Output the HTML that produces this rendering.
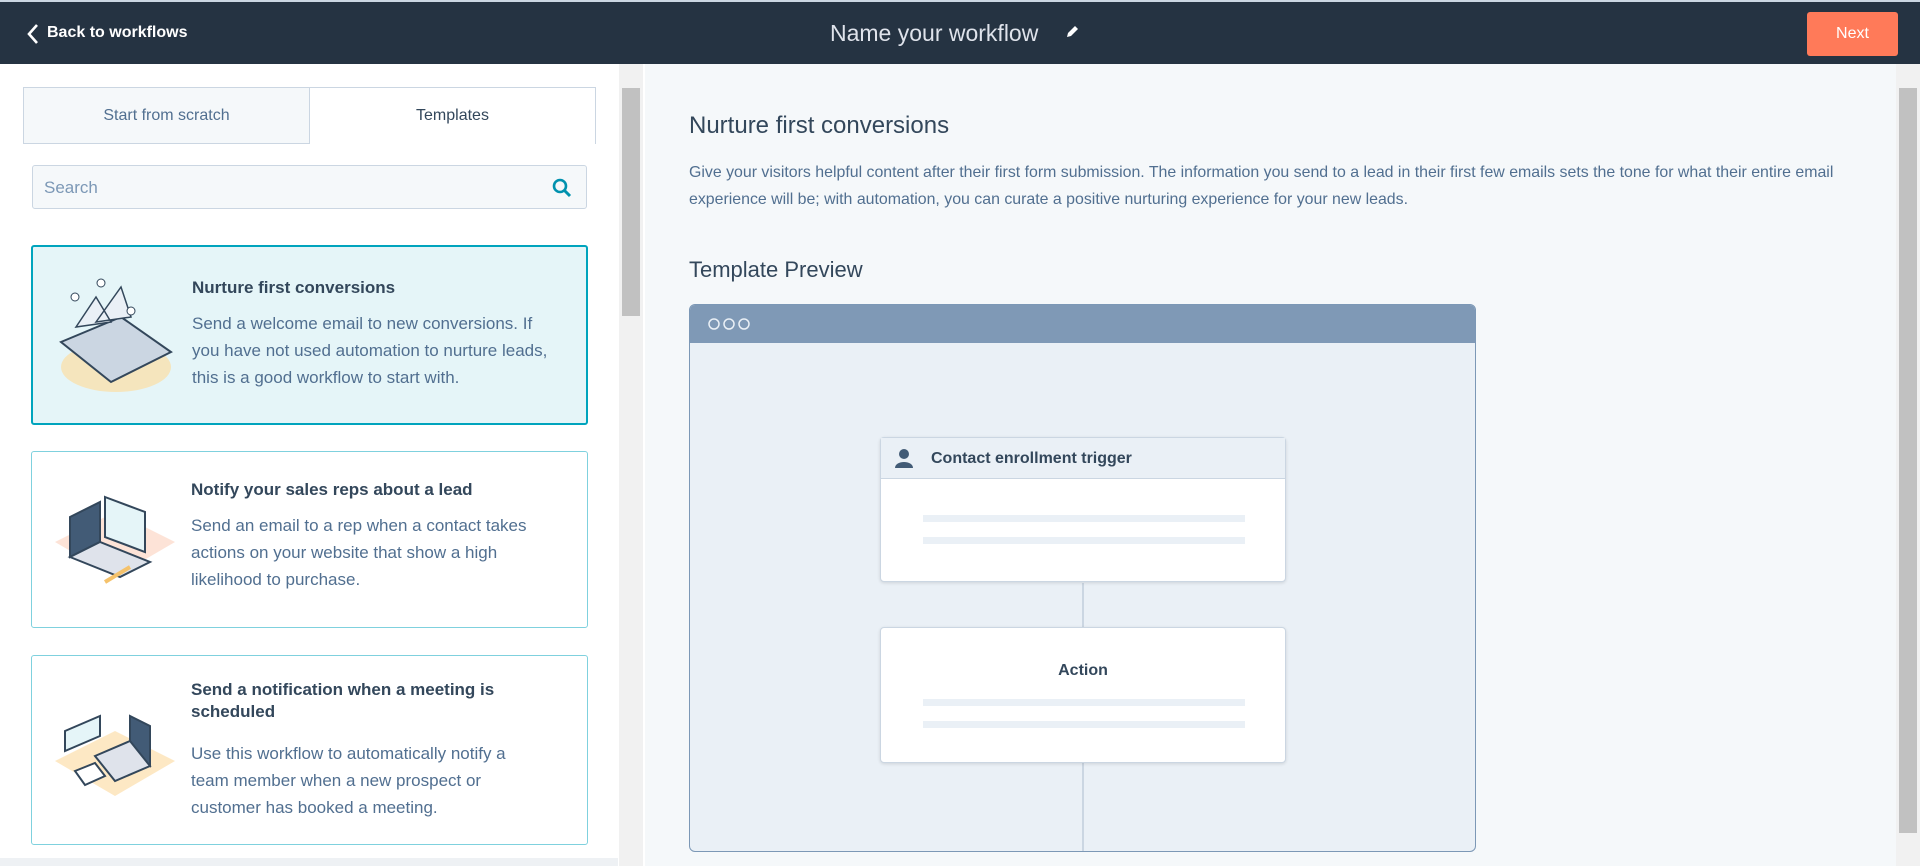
<!DOCTYPE html>
<html><head><meta charset="utf-8"><style>
*{box-sizing:border-box;margin:0;padding:0}
body{width:1920px;height:866px;overflow:hidden;font-family:"Liberation Sans",sans-serif;color:#33475b;background:#fff;position:relative}
.hdr{position:absolute;left:0;top:0;width:1920px;height:64px;background:#253342;border-top:2px solid #cbd6e2}
.back{position:absolute;left:27px;top:21px;color:#fff;font-weight:bold;font-size:16px}
.title{position:absolute;left:830px;top:18px;color:#dfe3eb;font-size:23px}
.next{position:absolute;left:1807px;top:10px;width:91px;height:44px;background:#ff7a59;border-radius:3px;color:#fff;font-size:16px;text-align:center;line-height:44px}
.left{position:absolute;left:0;top:64px;width:618px;height:802px;background:#fff}
.sb{position:absolute;background:#f1f1f1;width:24px}
.thumb{position:absolute;background:#c1c1c1;left:3px;width:18px}
.right{position:absolute;left:645px;top:64px;width:1251px;height:802px;background:#f5f8fa}
.tab{position:absolute;top:87px;height:57px;border:1px solid #cbd6e2;font-size:16px;text-align:center;line-height:55px}
.search{position:absolute;left:32px;top:165px;width:555px;height:44px;background:#f5f8fa;border:1px solid #cbd6e2;border-radius:3px;font-size:17px;color:#7c98b6;padding:12px 11px}
.card{position:absolute;left:31px;width:557px;border:1px solid #7fd1de;border-radius:3px;background:#fff}
.card h3{position:absolute;left:159px;width:340px;font-size:17px;font-weight:bold;color:#33475b;line-height:22px}
.card p{position:absolute;left:159px;width:360px;font-size:17px;line-height:27px;color:#516f90}
.card svg{position:absolute;left:18px}
.node{position:absolute;left:880px;width:406px;background:#fff;border:1px solid #cbd6e2;border-radius:4px;box-shadow:0 1px 3px rgba(0,0,0,.12)}
.ln{position:absolute;left:42px;width:322px;height:7px;background:#eaf0f6}
</style></head><body>
<div class="hdr">
<svg style="position:absolute;left:26px;top:21px" width="14" height="22" viewBox="0 0 14 22"><path d="M11 2 L3 11 L11 20" stroke="#fff" stroke-width="2.6" fill="none"/></svg>
<div class="back" style="left:47px;top:22px">Back to workflows</div>
<div class="title">Name your workflow</div>
<svg style="position:absolute;left:1064px;top:22px" width="16" height="16" viewBox="0 0 16 16"><path d="M3 13 L4 9 L11 2 L14 5 L7 12 Z" fill="#fff"/></svg>
<div class="next">Next</div>
</div>
<div class="left"></div>
<div class="tab" style="left:23px;width:287px;background:#f5f8fa;color:#516f90">Start from scratch</div>
<div class="tab" style="left:310px;width:286px;background:#fff;border-left:none;border-bottom:none">Templates</div>
<div class="search">Search
<svg style="position:absolute;right:14px;top:12px" width="20" height="20" viewBox="0 0 20 20"><circle cx="8" cy="8" r="6" stroke="#0091ae" stroke-width="2.6" fill="none"/><path d="M12.5 12.5 L18 18" stroke="#0091ae" stroke-width="3"/></svg></div>

<div class="card" style="top:245px;height:180px;border:2px solid #00a4bd;background:#e5f5f8">
<svg style="top:20px" width="130" height="140" viewBox="0 0 130 140"><ellipse cx="65" cy="100" rx="55" ry="25" fill="#f5e5bd"/><path d="M10 75 L70 50 L120 85 L60 115 Z" fill="#cbd6e2" stroke="#33475b" stroke-width="2"/><path d="M25 60 L45 30 L60 55 Z M45 55 L70 20 L80 50 Z" fill="#eaf0f6" stroke="#33475b" stroke-width="1.5"/><circle cx="24" cy="30" r="4" fill="#fff" stroke="#33475b"/><circle cx="50" cy="16" r="4" fill="#fff" stroke="#33475b"/><circle cx="80" cy="44" r="4" fill="#fff" stroke="#33475b"/></svg>
<h3 style="top:30px">Nurture first conversions</h3>
<p style="top:63px">Send a welcome email to new conversions. If you have not used automation to nurture leads, this is a good workflow to start with.</p></div>

<div class="card" style="top:451px;height:177px">
<svg style="top:30px" width="130" height="120" viewBox="0 0 130 120"><path d="M5 60 L65 30 L125 60 L65 95 Z" fill="#fde3d7"/><path d="M20 35 L50 20 L50 60 L20 75 Z" fill="#425b76" stroke="#33475b" stroke-width="2"/><path d="M20 75 L70 95 L100 80 L50 60 Z" fill="#dfe3eb" stroke="#33475b" stroke-width="2"/><path d="M55 15 L95 30 L95 70 L55 55 Z" fill="#e5f5f8" stroke="#33475b" stroke-width="2"/><path d="M55 100 L80 85" stroke="#f5c26b" stroke-width="4"/></svg>
<h3 style="top:27px;width:400px">Notify your sales reps about a lead</h3>
<p style="top:60px">Send an email to a rep when a contact takes actions on your website that show a high likelihood to purchase.</p></div>

<div class="card" style="top:655px;height:190px">
<svg style="top:45px" width="130" height="120" viewBox="0 0 130 120"><path d="M5 60 L65 30 L125 60 L65 95 Z" fill="#fde8c4"/><path d="M80 15 L100 25 L100 65 L80 55 Z" fill="#425b76" stroke="#33475b" stroke-width="2"/><path d="M45 55 L80 40 L100 65 L65 80 Z" fill="#dfe3eb" stroke="#33475b" stroke-width="2"/><path d="M15 30 L50 15 L50 35 L15 50 Z" fill="#e5f5f8" stroke="#33475b" stroke-width="2"/><path d="M25 70 L45 62 L55 75 L35 84 Z" fill="#fff" stroke="#33475b" stroke-width="2"/></svg>
<h3 style="top:23px">Send a notification when a meeting is scheduled</h3>
<p style="top:84px;width:345px">Use this workflow to automatically notify a team member when a new prospect or customer has booked a meeting.</p></div>

<div class="sb" style="left:619px;top:64px;height:802px"><div class="thumb" style="top:24px;height:228px"></div></div>
<div style="position:absolute;left:0;top:858px;width:618px;height:8px;background:#eef1f4"></div>

<div class="right">
<div style="position:absolute;left:44px;top:48px;font-size:24px;color:#33475b">Nurture first conversions</div>
<div style="position:absolute;left:44px;top:95px;width:1185px;font-size:15.9px;line-height:27px;color:#516f90">Give your visitors helpful content after their first form submission. The information you send to a lead in their first few emails sets the tone for what their entire email experience will be; with automation, you can curate a positive nurturing experience for your new leads.</div>
<div style="position:absolute;left:44px;top:193px;font-size:22px;color:#33475b">Template Preview</div>
</div>
<div style="position:absolute;left:689px;top:304px;width:787px;height:548px;border:1px solid #7c98b6;border-radius:6px;background:#eaf0f6;overflow:hidden">
<div style="height:38px;background:#7f99b6;position:relative"><svg style="position:absolute;left:18px;top:12px" width="44" height="14"><circle cx="6" cy="7" r="5" stroke="#eaf0f6" stroke-width="1.5" fill="none"/><circle cx="21" cy="7" r="5" stroke="#eaf0f6" stroke-width="1.5" fill="none"/><circle cx="36" cy="7" r="5" stroke="#eaf0f6" stroke-width="1.5" fill="none"/></svg></div>
<div style="position:absolute;left:392px;top:278px;width:2px;height:270px;background:#cbd6e2"></div>
</div>
<div class="node" style="top:437px;height:145px">
<div style="height:41px;background:#eaf0f6;border-bottom:1px solid #cbd6e2;position:relative;font-weight:bold;font-size:16px;padding:12px 0 0 50px">
<svg style="position:absolute;left:12px;top:9px" width="22" height="22" viewBox="0 0 22 22"><circle cx="11" cy="7" r="5" fill="#425b76"/><path d="M2 21 C2 13 20 13 20 21 Z" fill="#425b76"/></svg>Contact enrollment trigger</div>
<div class="ln" style="top:77px"></div><div class="ln" style="top:99px"></div></div>
<div class="node" style="top:627px;height:136px">
<div style="text-align:center;font-weight:bold;font-size:16px;margin-top:34px">Action</div>
<div class="ln" style="top:71px"></div><div class="ln" style="top:93px"></div></div>
<div class="sb" style="left:1896px;top:64px;height:802px"><div class="thumb" style="top:24px;height:745px"></div></div>
</body></html>
